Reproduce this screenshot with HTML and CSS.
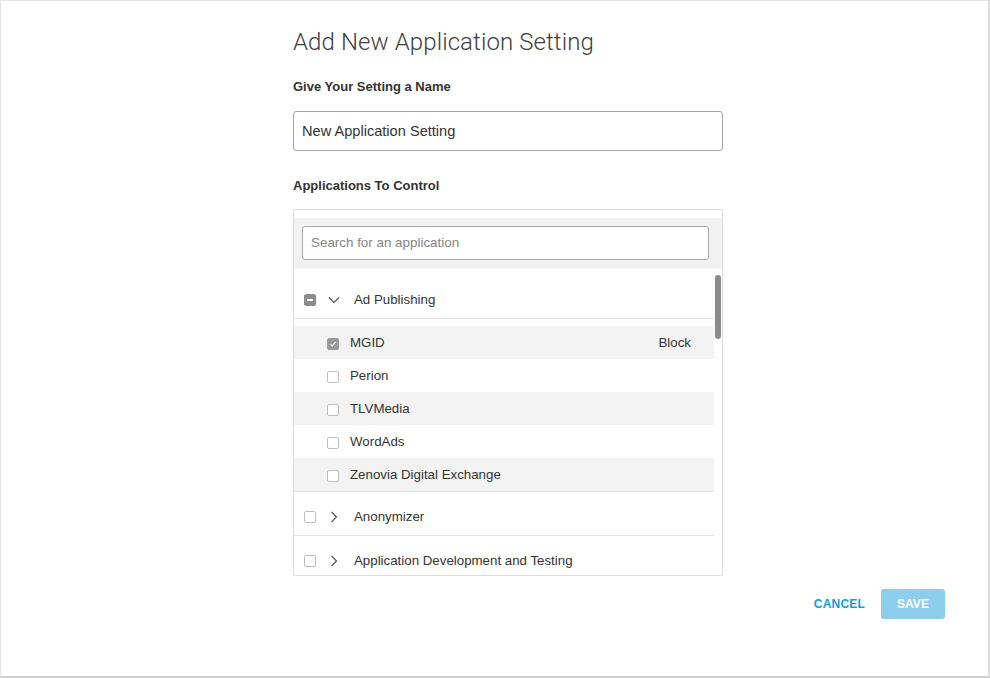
FILE: index.html
```html
<!DOCTYPE html>
<html>
<head>
<meta charset="utf-8">
<link rel="stylesheet" href="styles.css">
</head>
<body>
<div class="frame">
  <div class="column">
    <h1 class="title">Add New Application Setting</h1>
    <div class="label">Give Your Setting a Name</div>
    <div class="name-input">New Application Setting</div>
    <div class="label label-apps">Applications To Control</div>
    <div class="picker">
      <div class="search-band">
        <div class="search-input">Search for an application</div>
      </div>
      <div class="scroll-area">
        <div class="items">
          <div class="group-row">
            <span class="cb cb-minus"></span>
            <svg class="chev" width="12" height="12" viewBox="0 0 12 12"><path d="M1 3.5 L6 8.5 L11 3.5" fill="none" stroke="#555" stroke-width="1.2"/></svg>
            <span class="group-name">Ad Publishing</span>
          </div>
          <div class="children">
            <div class="child-row shaded">
              <span class="cb cb-checked"><svg width="12" height="12" viewBox="0 0 12 12"><path d="M3 6.2 L5.2 8.3 L9 3.8" fill="none" stroke="#fff" stroke-width="1.3"/></svg></span>
              <span class="child-name">MGID</span>
              <span class="action">Block</span>
            </div>
            <div class="child-row">
              <span class="cb"></span>
              <span class="child-name">Perion</span>
            </div>
            <div class="child-row shaded">
              <span class="cb"></span>
              <span class="child-name">TLVMedia</span>
            </div>
            <div class="child-row">
              <span class="cb"></span>
              <span class="child-name">WordAds</span>
            </div>
            <div class="child-row shaded">
              <span class="cb"></span>
              <span class="child-name">Zenovia Digital Exchange</span>
            </div>
          </div>
          <div class="group-row">
            <span class="cb"></span>
            <svg class="chev" width="12" height="12" viewBox="0 0 12 12"><path d="M3.5 1 L8.5 6 L3.5 11" fill="none" stroke="#555" stroke-width="1.2"/></svg>
            <span class="group-name">Anonymizer</span>
          </div>
          <div class="group-row">
            <span class="cb"></span>
            <svg class="chev" width="12" height="12" viewBox="0 0 12 12"><path d="M3.5 1 L8.5 6 L3.5 11" fill="none" stroke="#555" stroke-width="1.2"/></svg>
            <span class="group-name">Application Development and Testing</span>
          </div>
        </div>
        <div class="track"><div class="thumb"></div></div>
      </div>
    </div>
  </div>
  <div class="footer">
    <span class="cancel">CANCEL</span>
    <span class="save">SAVE</span>
  </div>
</div>
</body>
</html>
```

FILE: styles.css
```css
html, body {
  margin: 0;
  padding: 0;
  background: #fff;
}

.frame {
  width: 990px;
  height: 678px;
  box-sizing: border-box;
  border: 1px solid #e4e4e4;
  border-bottom: 2px solid #cfcfcf;
  border-right: 2px solid #dcdcdc;
  font-family: "Liberation Sans", Arial, sans-serif;
  color: #333;
  overflow: hidden;
}

.column {
  margin-left: 292px;
  width: 430px;
  padding-top: 26px;
}

.title {
  margin: 0;
  font-family: Roboto, "Liberation Sans", sans-serif;
  font-weight: 300;
  font-size: 24px;
  line-height: 30px;
  color: #404040;
  letter-spacing: 0.1px;
}

.label {
  margin-top: 20px;
  font-weight: bold;
  font-size: 13px;
  line-height: 20px;
  color: #333;
}

.label-apps {
  margin-top: 25px;
}

.name-input {
  margin-top: 14px;
  height: 40px;
  box-sizing: border-box;
  border: 1px solid #a5a5a5;
  border-radius: 3px;
  padding: 0 8px;
  font-size: 14.6px;
  line-height: 38px;
  color: #333;
}

.picker {
  margin-top: 13px;
  height: 367px;
  box-sizing: border-box;
  border: 1px solid #dcdcdc;
  border-radius: 2px;
  overflow: hidden;
  padding-top: 8px;
}

.search-band {
  background: #f2f2f2;
  padding: 8px 13px 9px 8px;
}

.search-input {
  height: 34px;
  box-sizing: border-box;
  background: #fff;
  border: 1px solid #a8a8a8;
  border-radius: 3px;
  padding: 0 8px;
  font-size: 13.4px;
  line-height: 32px;
  color: #858585;
}

.scroll-area {
  display: flex;
}

.items {
  flex: 1;
  padding-top: 6px;
}

.track {
  width: 8px;
  padding-top: 6px;
  display: flex;
  justify-content: center;
}

.thumb {
  width: 6px;
  height: 64px;
  border-radius: 3px;
  background: #8a8a8a;
}

.group-row {
  display: flex;
  align-items: center;
  height: 37px;
  padding-top: 6px;
  padding-left: 10px;
  border-bottom: 1px solid #e2e2e2;
  font-size: 13.3px;
  box-sizing: content-box;
}

.group-row + .children {
  margin-top: -1px;
}

.chev {
  margin-left: 12px;
  margin-right: 14px;
}

.group-name {
  color: #333;
}

.children {
  padding-top: 8px;
  border-bottom: 1px solid #e2e2e2;
}

.child-row {
  display: flex;
  align-items: center;
  height: 33px;
  padding-left: 33px;
  padding-right: 23px;
  font-size: 13.3px;
}

.child-row.shaded {
  background: #f3f3f3;
}

.child-row .cb {
  margin-top: 3px;
}

.child-name {
  margin-left: 11px;
  flex: 1;
}

.action {
  color: #333;
}

.cb {
  display: inline-flex;
  align-items: center;
  justify-content: center;
  width: 12px;
  height: 12px;
  box-sizing: border-box;
  border: 1px solid #bdbdbd;
  border-radius: 2px;
  background: #fff;
  flex: none;
}

.cb-minus {
  background: #8c8c8c;
  border-color: #8c8c8c;
}

.cb-minus::after {
  content: "";
  width: 6px;
  height: 2px;
  background: #fff;
}

.cb-checked {
  background: #9a9a9a;
  border-color: #9a9a9a;
}

.footer {
  display: flex;
  justify-content: flex-end;
  align-items: center;
  margin-top: 13px;
  padding-right: 43px;
}

.cancel {
  font-size: 12px;
  font-weight: bold;
  color: #119fd6;
  margin-right: 16px;
  letter-spacing: 0.2px;
}

.save {
  width: 64px;
  height: 30px;
  box-sizing: border-box;
  border-radius: 3px;
  background: #8dceed;
  color: #fff;
  font-size: 12px;
  font-weight: bold;
  line-height: 30px;
  text-align: center;
}
```
